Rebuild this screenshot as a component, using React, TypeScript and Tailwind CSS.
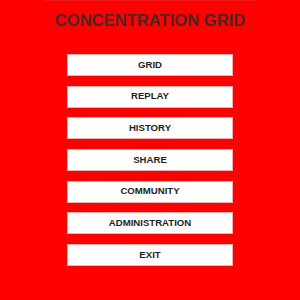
const items = ["GRID", "REPLAY", "HISTORY", "SHARE", "COMMUNITY", "ADMINISTRATION", "EXIT"];

export default function App() {
  return (
    <div className="w-[300px] h-[300px] bg-[#ff0000] flex flex-col items-center font-['Liberation_Sans',Arial,sans-serif]">
      <div className="w-[215px] h-px bg-[#f01616]" />
      <h1 className="mt-[10px] text-[16.6px] leading-[20px] font-bold text-[#4f2424]">CONCENTRATION GRID</h1>
      <div className="mt-[23px] flex flex-col gap-[9.67px]">
        {items.map((item) => (
          <button
            key={item}
            className="w-[166px] h-[22px] bg-white border border-[#f3b0b0] text-[9.6px] font-bold text-[#1e1e1e] flex items-center justify-center"
          >
            {item}
          </button>
        ))}
      </div>
    </div>
  );
}
